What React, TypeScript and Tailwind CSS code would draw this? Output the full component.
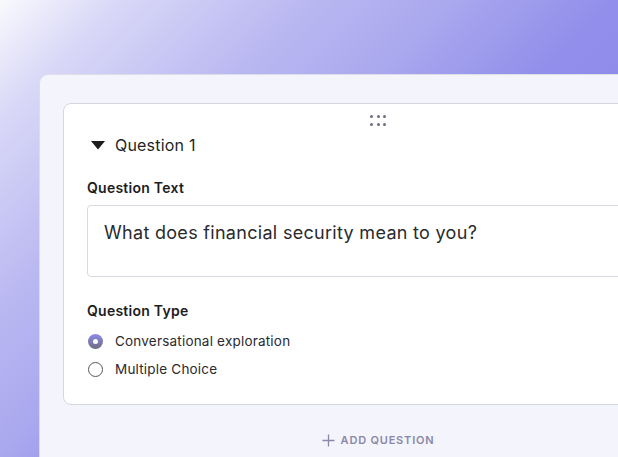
import React from "react";

function DragHandle() {
  return (
    <div className="grid grid-cols-3 gap-x-[3.5px] gap-y-[5px] w-fit">
      {[0, 1, 2, 3, 4, 5].map((i) => (
        <span key={i} className="block w-[3px] h-[3px] rounded-full bg-[#6d6d7d]" />
      ))}
    </div>
  );
}

export default function App() {
  return (
    <div
      className="relative w-[618px] h-[457px] overflow-hidden"
      style={{ fontFamily: "Inter, 'Liberation Sans', sans-serif" }}
    >
      <div className="absolute inset-0 bg-[linear-gradient(135deg,#f9f9fd_0%,#d9d8f7_11%,#bbb9f1_28%,#aaa8ee_42%,#918fea_57%,#8583e7_100%)]" />
      <div className="relative pt-[74px] pl-[39px]">
        <div className="w-[678px] h-[420px] bg-[#f4f4fd] border border-[#dddde8] rounded-[9px] px-[23px] pt-[28px]">
          <div className="bg-white border border-[#d6d6df] rounded-[8px] pl-[23px] pt-[11px] pb-[23px]">
            <div className="flex justify-center pr-[23px]">
              <DragHandle />
            </div>
            <div className="mt-[7px] flex items-center h-[24px]">
              <svg width="14" height="9" viewBox="0 0 14 9" className="ml-[4px]">
                <path d="M0 0 L14 0 L7 8.5 Z" fill="#1c1c1c" />
              </svg>
              <span className="ml-[10px] text-[16px] tracking-[0.2px] text-[#1f1f24]">Question 1</span>
            </div>
            <div className="mt-[21px] text-[14px] leading-[20px] font-semibold tracking-[0.25px] text-[#1d1d22]">
              Question Text
            </div>
            <div className="mt-[7px] h-[72px] border border-[#d9d9e3] rounded-[4px] pl-[16px] pt-[15px]">
              <span className="text-[18px] leading-[24px] tracking-[0.3px] text-[#2a2a2e]">
                What does financial security mean to you?
              </span>
            </div>
            <div className="mt-[24px] text-[14px] leading-[20px] font-semibold tracking-[0.25px] text-[#1d1d22]">
              Question Type
            </div>
            <div className="mt-[8px] flex flex-col gap-[4px]">
              <div className="flex items-center h-[24px]">
                <span className="ml-[1px] w-[15px] h-[15px] rounded-full bg-[linear-gradient(180deg,#8c8ae6,#6e6d82)] flex items-center justify-center">
                  <span className="w-[5px] h-[5px] rounded-full bg-white" />
                </span>
                <span className="ml-[12px] text-[13.5px] tracking-[0.2px] text-[#2a2a30]">Conversational exploration</span>
              </div>
              <div className="flex items-center h-[24px]">
                <span className="ml-[1px] w-[15px] h-[15px] rounded-full border border-[#55555f] bg-white" />
                <span className="ml-[12px] text-[13.5px] tracking-[0.2px] text-[#2a2a30]">Multiple Choice</span>
              </div>
            </div>
          </div>
          <div className="mt-[27px] flex justify-center items-center h-[16px] gap-[6px] text-[#8a88a8]">
            <svg width="13" height="13" viewBox="0 0 13 13">
              <path d="M6.5 0.5 V12.5 M0.5 6.5 H12.5" stroke="#8a88a8" strokeWidth="1.3" />
            </svg>
            <span className="text-[11px] font-semibold tracking-[0.8px]">ADD QUESTION</span>
          </div>
        </div>
      </div>
    </div>
  );
}
